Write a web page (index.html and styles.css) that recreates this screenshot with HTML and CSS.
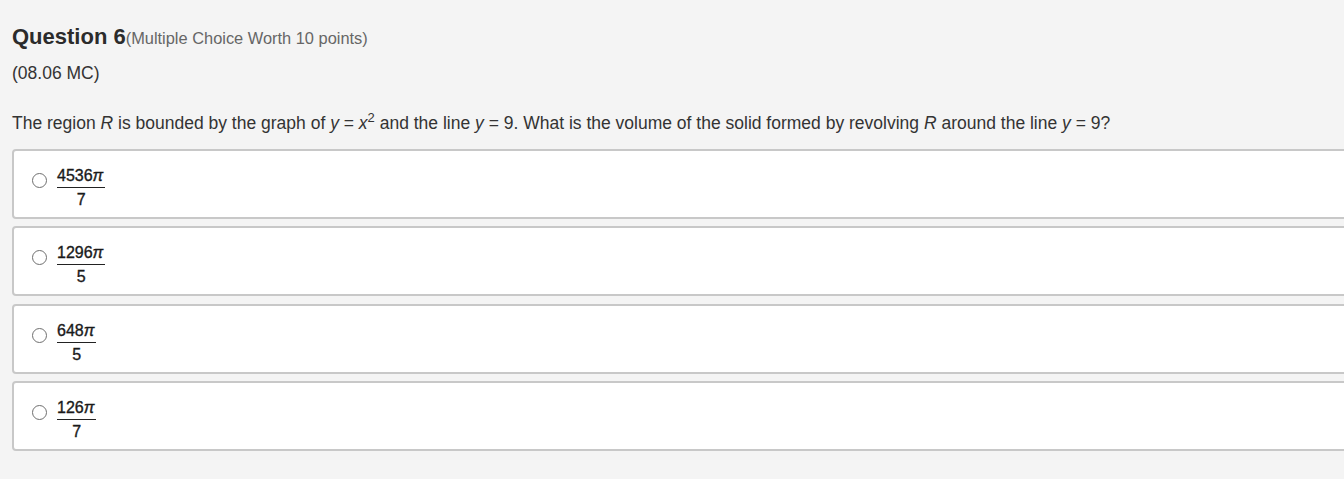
FILE: index.html
```html
<html>
    <head>
        <meta name="viewport" content="width=device-width, initial-scale=1.0">
        <title>Question 6</title>
        <link rel="stylesheet" href="styles.css">
    </head>
    <body>
        <div class="question">
            <h2 class="title">Question 6<span class="worth">(Multiple Choice Worth 10 points)</span></h2>
            <p class="code">(08.06 MC)</p>
            <p class="prompt">The region <i>R</i> is bounded by the graph of <i>y</i> = <i>x</i><sup>2</sup> and the line <i>y</i> = 9. What is the volume of the solid formed by revolving <i>R</i> around the line <i>y</i> = 9?</p>

            <!-- antworten -->
            <label class="choice"><span class="radio"></span><span class="frac"><span class="num">4536<i>π</i></span><span class="den">7</span></span></label>
            <label class="choice"><span class="radio"></span><span class="frac"><span class="num">1296<i>π</i></span><span class="den">5</span></span></label>
            <label class="choice"><span class="radio"></span><span class="frac"><span class="num">648<i>π</i></span><span class="den">5</span></span></label>
            <label class="choice"><span class="radio"></span><span class="frac"><span class="num">126<i>π</i></span><span class="den">7</span></span></label>
        </div>
    </body>
</html>
```

FILE: styles.css
```css
body {
    margin: 0;
    background: #f4f4f4;
    font-family: "Liberation Sans", Arial, sans-serif;
    color: #333;
    overflow: hidden;
}
.question {
    padding: 24px 0 0 12px;
}
.title {
    margin: 0;
    font-size: 22px;
    line-height: 25px;
    font-weight: bold;
    color: #2b2b2b;
}
.worth {
    font-size: 16.4px;
    font-weight: normal;
    color: #666;
}
.code {
    margin: 12.25px 0 0 0;
    font-size: 17.5px;
    line-height: 20px;
}
.prompt {
    margin: 30px 0 15.5px 0;
    font-size: 17.5px;
    line-height: 20px;
}
.prompt sup {
    font-size: 13px;
    line-height: 0;
    vertical-align: 7px;
}
.choice {
    display: flex;
    align-items: flex-start;
    height: 66px;
    margin: 0 -30px 7.5px 0;
    padding: 0 0 0 18px;
    background: #fff;
    border: 2px solid #c8c8c8;
    border-radius: 4px;
    cursor: pointer;
}
.radio {
    width: 13px;
    height: 13px;
    margin: 22px 10px 0 0;
    border: 1px solid #6f6f6f;
    border-radius: 50%;
    background: #fff;
    flex: none;
}
.frac {
    display: inline-flex;
    flex-direction: column;
    align-items: center;
    margin-top: 16px;
    font-size: 16px;
    line-height: 17px;
    color: #1a1a1a;
    -webkit-text-stroke: 0.35px #1a1a1a;
}
.num {
    padding: 0 2px 2.8px 0;
    border-bottom: 1px solid #222;
}
.den {
    padding-top: 3.2px;
}
```
